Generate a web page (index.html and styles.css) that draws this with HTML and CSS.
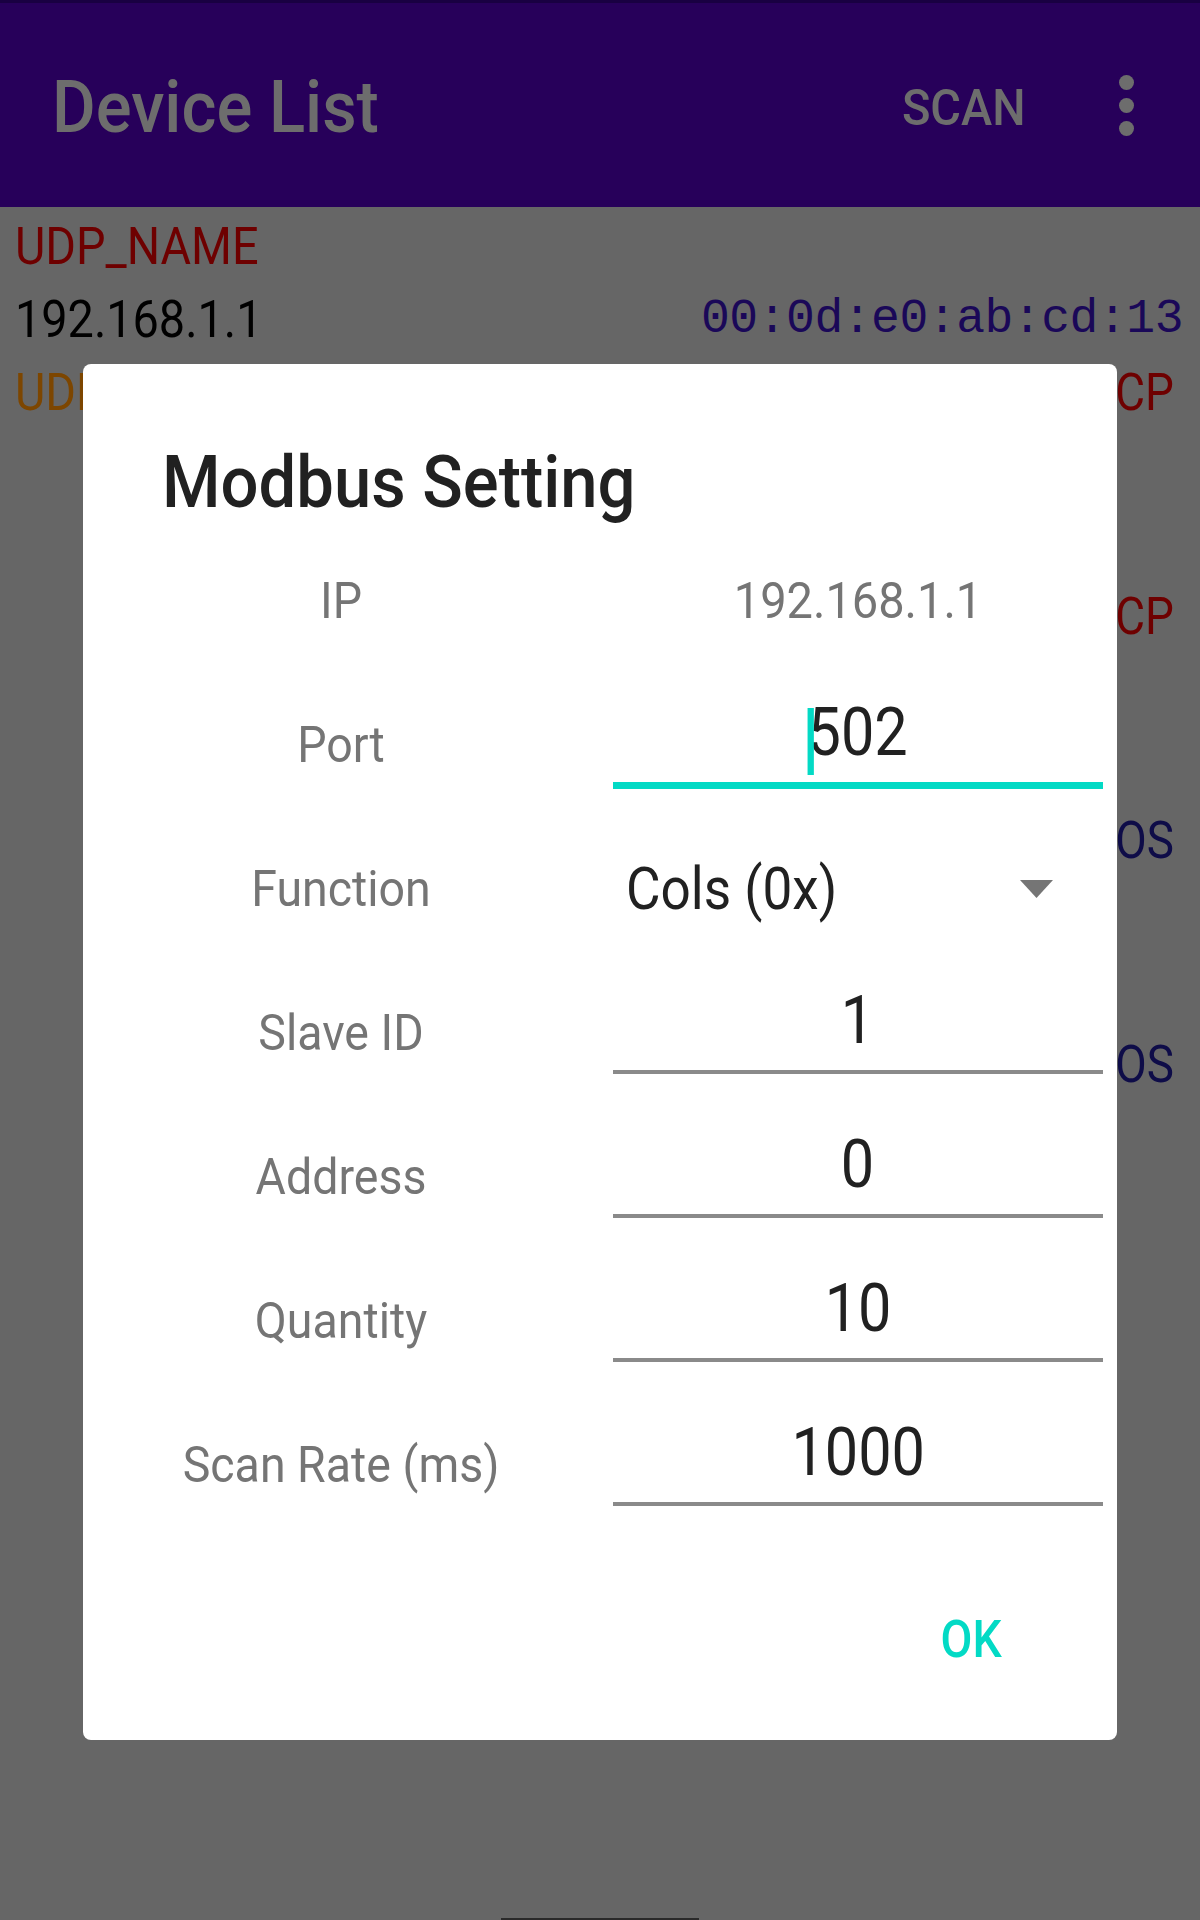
FILE: index.html
```html
<!DOCTYPE html>
<html lang="en">
<head>
<meta charset="utf-8">
<title>Device List</title>
<link rel="stylesheet" href="styles.css">
</head>
<body>
<div class="screen">
  <div class="status"></div>
  <header class="appbar">
    <h1 class="appbar-title">Device List</h1>
    <div class="appbar-actions">
      <span class="action">SCAN</span>
      <svg class="overflow" width="15" height="61" viewBox="0 0 15 61" aria-hidden="true">
        <circle cx="7.5" cy="7.5" r="7.5"/>
        <circle cx="7.5" cy="30.5" r="7.5"/>
        <circle cx="7.5" cy="53.5" r="7.5"/>
      </svg>
    </div>
  </header>

  <ul class="devices">
    <li class="device">
      <div class="line"><span class="name">UDP_NAME</span></div>
      <div class="line"><span class="ip">192.168.1.1</span><span class="mac">00:0d:e0:ab:cd:13</span></div>
      <div class="line"><span class="source">UDP</span><span class="proto proto-tcp">TCP</span></div>
    </li>
    <li class="device">
      <div class="line"></div>
      <div class="line"></div>
      <div class="line"><span class="proto proto-tcp">TCP</span></div>
    </li>
    <li class="device">
      <div class="line"></div>
      <div class="line"></div>
      <div class="line"><span class="proto proto-rtos">RTOS</span></div>
    </li>
    <li class="device">
      <div class="line"></div>
      <div class="line"></div>
      <div class="line"><span class="proto proto-rtos">RTOS</span></div>
    </li>
  </ul>

  <div class="nav-handle"></div>
</div>

<section class="dialog" role="dialog" aria-labelledby="dlg-title">
  <h2 class="dialog-title" id="dlg-title">Modbus Setting</h2>
  <div class="form">
    <div class="label">IP</div>
    <div class="static">192.168.1.1</div>

    <div class="label">Port</div>
    <div class="field focused"><span class="value caret">502</span></div>

    <div class="label">Function</div>
    <div class="spinner">
      <span class="spinner-text">Cols (0x)</span>
      <svg class="spinner-arrow" width="33" height="18" viewBox="0 0 33 18" aria-hidden="true"><polygon points="0,0 33,0 16.5,18"/></svg>
    </div>

    <div class="label">Slave ID</div>
    <div class="field"><span class="value">1</span></div>

    <div class="label">Address</div>
    <div class="field"><span class="value">0</span></div>

    <div class="label">Quantity</div>
    <div class="field"><span class="value">10</span></div>

    <div class="label">Scan Rate (ms)</div>
    <div class="field"><span class="value">1000</span></div>
  </div>
  <div class="actions"><span class="btn">OK</span></div>
</section>
</body>
</html>
```

FILE: styles.css
```css
* { box-sizing: border-box; }

html, body {
  margin: 0;
  padding: 0;
}

body {
  width: 1200px;
  height: 1920px;
  overflow: hidden;
  background: #666666;
  font-family: "Roboto", "Liberation Sans", sans-serif;
  position: relative;
}

/* ---------- app (dimmed under the dialog scrim) ---------- */
.screen {
  height: 1920px;
  display: flex;
  flex-direction: column;
}

.status {
  height: 3px;
  background: #190042;
}

.appbar {
  height: 204px;
  background: #27005a;
  display: flex;
  align-items: center;
  justify-content: space-between;
  padding: 6px 66px 0 52px;
  color: #6d6d6d;
}

.appbar-title {
  margin: 0;
  font-size: 72px;
  line-height: 72px;
  font-weight: 500;
  transform: scaleX(0.93);
  transform-origin: left center;
}

.appbar-actions {
  display: flex;
  align-items: center;
  gap: 93px;
}

.action {
  font-size: 50px;
  line-height: 50px;
  font-weight: 500;
  transform: scaleX(0.94);
  transform-origin: right center;
}

.overflow {
  fill: #6d6d6d;
  margin-bottom: 6px;
}

.devices {
  list-style: none;
  margin: 0;
  padding: 3px 17px 0 15px;
  flex: 1;
}

.device {
  margin-bottom: 5px;
}

.line {
  height: 73px;
  display: flex;
  justify-content: space-between;
  align-items: center;
  font-size: 52px;
  line-height: 73px;
}

.name,
.ip,
.source {
  transform: scaleX(0.9);
  transform-origin: left center;
}

.name { color: #6e0000; }
.ip { color: #000000; }
.source { color: #7d4600; }

.mac {
  font-family: "Liberation Mono", "DejaVu Sans Mono", monospace;
  font-size: 48px;
  letter-spacing: -0.45px;
  color: #1a0858;
}

.proto {
  margin-left: auto;
  margin-right: 9px;
  transform: scaleX(0.88);
  transform-origin: right center;
}
.proto-tcp { color: #6e0000; }
.proto-rtos { color: #0e0c48; }

.nav-handle {
  width: 198px;
  height: 2px;
  margin: 0 auto;
  background: #2a2a2a;
}

/* ---------- dialog ---------- */
.dialog {
  position: absolute;
  top: 364px;
  left: 83px;
  width: 1034px;
  height: 1376px;
  background: #ffffff;
  border-radius: 8px;
}

.dialog-title {
  margin: 83px 0 0 79px;
  font-size: 72px;
  line-height: 72px;
  font-weight: 500;
  color: #212121;
  transform: scaleX(0.93);
  transform-origin: left center;
}

.form {
  margin-top: 9.5px;
  display: grid;
  grid-template-columns: 516px 490px;
  grid-auto-rows: 144px;
  column-gap: 14px;
}

.label,
.static {
  display: flex;
  align-items: center;
  justify-content: center;
  font-size: 50px;
  line-height: 50px;
  color: #757575;
  transform: scaleX(0.93);
}

.static { transform: scaleX(0.94); }

.field {
  align-self: start;
  height: 113px;
  padding-bottom: 16px;
  border-bottom: 4px solid #8a8a8a;
  display: flex;
  align-items: flex-end;
  justify-content: center;
}

.field.focused {
  height: 116px;
  border-bottom: 7px solid #03dac5;
}

.value {
  position: relative;
  font-size: 66px;
  line-height: 66px;
  color: #212121;
  transform: scaleX(0.9);
}

/* text cursor of the focused field */
.caret::before {
  content: "";
  position: absolute;
  left: 0;
  top: 8.5px;
  width: 6.5px;
  height: 67px;
  background: #03dac5;
}

.spinner {
  display: flex;
  align-items: center;
  justify-content: space-between;
  padding: 0 50px 0 13px;
}

.spinner-text {
  font-size: 59px;
  line-height: 59px;
  color: #212121;
  transform: scaleX(0.9);
  transform-origin: left center;
}

.spinner-arrow { fill: #757575; }

.actions {
  display: flex;
  justify-content: flex-end;
  padding-right: 115px;
  margin-top: 77.5px;
}

.btn {
  font-size: 52px;
  line-height: 52px;
  font-weight: 500;
  color: #03dac5;
  transform: scaleX(0.89);
  transform-origin: right center;
}
```
